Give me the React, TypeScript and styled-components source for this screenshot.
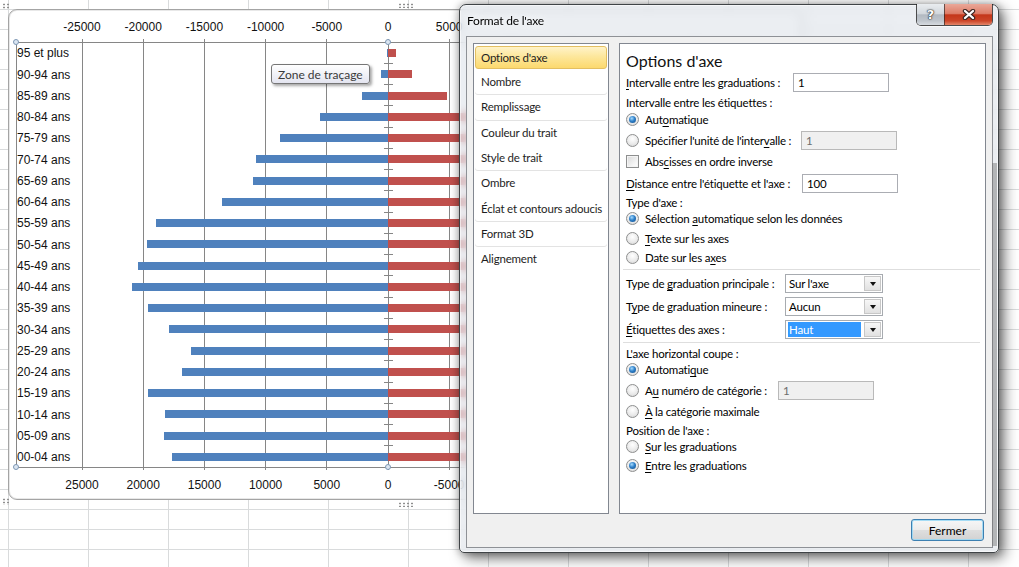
import React from 'react';
import styled, { createGlobalStyle, css } from 'styled-components';

const GlobalStyle = createGlobalStyle`
  html, body {
    margin: 0;
    padding: 0;
  }
  body {
    font-family: Lato, "Liberation Sans", sans-serif;
    font-size: 12px;
    color: #000;
  }
`;

// ---- data ----

type AgeRow = { label: string; m: number; f: number };

const AGES: AgeRow[] = [
  { label: '95 et plus', m: 90, f: 650 },
  { label: '90-94 ans', m: 570, f: 1960 },
  { label: '85-89 ans', m: 2150, f: 4800 },
  { label: '80-84 ans', m: 5560, f: 7800 },
  { label: '75-79 ans', m: 8820, f: 10900 },
  { label: '70-74 ans', m: 10780, f: 12300 },
  { label: '65-69 ans', m: 11030, f: 11900 },
  { label: '60-64 ans', m: 13560, f: 14100 },
  { label: '55-59 ans', m: 18950, f: 19600 },
  { label: '50-54 ans', m: 19690, f: 20100 },
  { label: '45-49 ans', m: 20420, f: 20500 },
  { label: '40-44 ans', m: 20920, f: 20800 },
  { label: '35-39 ans', m: 19610, f: 19500 },
  { label: '30-34 ans', m: 17890, f: 18100 },
  { label: '25-29 ans', m: 16090, f: 16500 },
  { label: '20-24 ans', m: 16830, f: 16400 },
  { label: '15-19 ans', m: 19580, f: 18700 },
  { label: '10-14 ans', m: 18220, f: 17400 },
  { label: '05-09 ans', m: 18300, f: 17500 },
  { label: '00-04 ans', m: 17620, f: 16900 },
];

const ZERO_X = 388;
const PX = 61.2 / 5000;
const PLOT = { left: 16, right: 760, top: 42, bottom: 467 };
const ROW_H = (PLOT.bottom - PLOT.top) / AGES.length;
const GRID = [-25000, -20000, -15000, -10000, -5000, 0, 5000, 10000, 15000, 20000, 25000];
// only the labels left of the dialog are drawn
const LABELED = [-25000, -20000, -15000, -10000, -5000, 0, 5000];
const xOf = (v: number) => ZERO_X + v * PX;

const NAV = [
  { label: "Options d'axe", active: true },
  { label: 'Nombre', sep: true },
  { label: 'Remplissage', sep: true },
  { label: 'Couleur du trait' },
  { label: 'Style de trait', sep: true },
  { label: 'Ombre' },
  { label: 'Éclat et contours adoucis', sep: true },
  { label: 'Format 3D', sep: true },
  { label: 'Alignement' },
];

// ---- sheet & chart ----

const Sheet = styled.div`
  position: relative;
  width: 1019px;
  height: 567px;
  overflow: hidden;
  background-color: #fff;
  background-image:
    linear-gradient(to right, #d9dbdc 1px, transparent 1px),
    linear-gradient(to bottom, #d9dbdc 1px, transparent 1px);
  background-size: 80px 20px;
  background-position: 8px 9px;
`;

const ChartArea = styled.div`
  position: absolute;
  left: 8px;
  top: 9px;
  width: 794px;
  height: 491px;
  box-sizing: border-box;
  border: 1px solid #a4a4a4;
  border-radius: 9px;
  background: #fff;
  box-shadow: inset 0 0 0 1px #e8e8e8;
  overflow: hidden;
`;

const Grip = styled.span<{ $x: number; $y: number; $w: number; $h: number }>`
  position: absolute;
  left: ${p => p.$x}px;
  top: ${p => p.$y}px;
  width: ${p => p.$w}px;
  height: ${p => p.$h}px;
  background-image: radial-gradient(circle, #8f8f8f 0.8px, transparent 1.2px);
  background-size: 4px 3px;
`;

const PlotSvg = styled.svg`
  display: block;
  font-family: "Liberation Sans", Arial, sans-serif;
  font-size: 12px;
`;

const GridLine = styled.line`
  stroke: #868686;
  stroke-width: 1;
  shape-rendering: crispEdges;
`;

const AxisText = styled.text`
  fill: #111;
`;

const Bar = styled.rect<{ $tone: 'male' | 'female' }>`
  fill: ${p => (p.$tone === 'male' ? '#4f81bd' : '#c0504d')};
  shape-rendering: crispEdges;
`;

const HandleDot = styled.circle`
  fill: #dce6f2;
  stroke: #7d97b4;
  stroke-width: 1;
`;

const Tooltip = styled.div`
  position: absolute;
  left: 271px;
  top: 64px;
  height: 20px;
  padding: 0 6px;
  box-sizing: border-box;
  display: flex;
  align-items: center;
  border: 1px solid #767676;
  border-radius: 3px;
  background: linear-gradient(#ffffff, #e4e5f0);
  box-shadow: 2px 2px 3px rgba(0, 0, 0, 0.35);
  color: #3a3a3a;
  font-size: 12px;
  white-space: nowrap;
`;

function PopulationChart() {
  return (
    <PlotSvg width={792} height={489} viewBox="9 10 792 489">
      {GRID.map(v => (
        <GridLine key={v} x1={xOf(v)} x2={xOf(v)} y1={PLOT.top - 3} y2={PLOT.bottom + 3} />
      ))}
      {LABELED.map(v => (
        <g key={v}>
          <AxisText x={xOf(v)} y={30.5} textAnchor="middle">{v}</AxisText>
          <AxisText x={xOf(v)} y={488.5} textAnchor="middle">{v === 0 ? 0 : -v}</AxisText>
        </g>
      ))}
      <GridLine x1={PLOT.left} x2={PLOT.right} y1={PLOT.top} y2={PLOT.top} />
      <GridLine x1={PLOT.left} x2={PLOT.right} y1={PLOT.bottom} y2={PLOT.bottom} />
      <GridLine x1={PLOT.left} x2={PLOT.left} y1={PLOT.top} y2={PLOT.bottom} />
      <GridLine x1={PLOT.right} x2={PLOT.right} y1={PLOT.top} y2={PLOT.bottom} />
      {AGES.slice(1).map((a, i) => {
        const y = PLOT.top + ROW_H * (i + 1);
        return <GridLine key={a.label} x1={ZERO_X - 4} x2={ZERO_X + 5} y1={y} y2={y} />;
      })}
      {AGES.map((a, i) => {
        const cy = PLOT.top + ROW_H * (i + 0.5) + 0.5;
        return (
          <g key={a.label}>
            <Bar $tone="male" x={xOf(-a.m)} y={cy - 4} width={a.m * PX} height={8} />
            <Bar $tone="female" x={ZERO_X} y={cy - 4} width={a.f * PX} height={8} />
            <AxisText x={17} y={cy + 4.3}>{a.label}</AxisText>
          </g>
        );
      })}
      <HandleDot cx={PLOT.left} cy={PLOT.top} r={2.5} />
      <HandleDot cx={PLOT.left} cy={PLOT.bottom} r={2.5} />
      <HandleDot cx={ZERO_X} cy={PLOT.top} r={2.5} />
      <HandleDot cx={ZERO_X} cy={PLOT.bottom} r={2.5} />
    </PlotSvg>
  );
}

// ---- dialog ----

const Dialog = styled.div`
  position: absolute;
  left: 459px;
  top: 4px;
  width: 540px;
  height: 549px;
  box-sizing: border-box;
  display: flex;
  flex-direction: column;
  border: 1px solid #3f4346;
  border-radius: 7px 7px 5px 5px;
  background: rgba(224, 229, 235, 0.66);
  backdrop-filter: blur(4px);
  box-shadow:
    inset 0 0 0 1px rgba(255, 255, 255, 0.55),
    5px 5px 14px rgba(0, 0, 0, 0.55),
    0 0 8px rgba(0, 0, 0, 0.3);
  font-size: 11.5px;
  letter-spacing: -0.2px;

  &::after {
    content: '';
    position: absolute;
    right: 1px;
    top: 158px;
    bottom: 6px;
    width: 5px;
    background: rgba(110, 110, 110, 0.45);
  }
`;

const TitleBar = styled.div`
  height: 31px;
  flex-shrink: 0;
  display: flex;
  align-items: center;
  padding: 0 5px 0 7px;
`;

const Caption = styled.span`
  font-size: 12px;
  text-shadow: 0 0 8px rgba(255, 255, 255, 0.95);
`;

const CaptionButtons = styled.div`
  margin-left: auto;
  align-self: flex-start;
  margin-top: -1px;
  display: flex;
  border: 1px solid rgba(35, 35, 35, 0.8);
  border-top: none;
  border-radius: 0 0 5px 5px;
  overflow: hidden;
  box-shadow: 0 1px 0 rgba(255, 255, 255, 0.7);
`;

const CaptionButton = styled.div<{ $close?: boolean }>`
  width: ${p => (p.$close ? 47 : 27)}px;
  height: 21px;
  display: flex;
  align-items: center;
  justify-content: center;
  color: #fff;
  font-family: "DejaVu Sans", sans-serif;
  font-weight: bold;
  font-size: 13px;
  letter-spacing: 0;
  text-shadow: 0 0 1px #222, 0 0 1px #222, 0 0 2px #333;
  background: ${p =>
    p.$close
      ? 'linear-gradient(#eaa899 0%, #dd7d68 45%, #c4361a 52%, #cc4528 80%, #e3866a 100%)'
      : 'linear-gradient(#e9ecef 0%, #d3d8dd 45%, #b3bac2 52%, #bfc5cc 80%, #d6dbe0 100%)'};

  & + & {
    border-left: 1px solid rgba(35, 35, 35, 0.65);
  }
`;

const Client = styled.div`
  flex: 1;
  margin: 0 5px 4px 6px;
  box-sizing: border-box;
  border: 1px solid #8e9196;
  background: #f0f0f0;
  padding: 6px 6px 0 6px;
  display: flex;
  flex-direction: column;
`;

const Body = styled.div`
  height: 471px;
  flex-shrink: 0;
  display: flex;
  gap: 10px;
`;

const Nav = styled.ul`
  list-style: none;
  margin: 0;
  padding: 2px 1px;
  width: 136px;
  box-sizing: border-box;
  border: 1px solid #828790;
  background: #fff;
`;

const NavItem = styled.li<{ $active?: boolean; $sep?: boolean }>`
  height: ${p => (p.$active ? 23 : 25.3)}px;
  box-sizing: border-box;
  display: flex;
  align-items: center;
  padding-left: 5px;
  border: 1px solid transparent;
  border-radius: 3px;
  color: #1e1e1e;
  white-space: nowrap;
  ${p =>
    p.$sep &&
    css`
      box-shadow: 0 1px 0 #e3e3e3;
    `}
  ${p =>
    p.$active &&
    css`
      border-color: #e3bf61;
      background: linear-gradient(#fff3c9 0%, #fde79c 45%, #fcd96e 100%);
    `}
`;

const Panel = styled.div`
  flex: 1;
  box-sizing: border-box;
  border: 1px solid #828790;
  background: #fff;
  padding: 0 6px;
  display: flex;
  flex-direction: column;
`;

const PanelTitle = styled.div`
  margin-top: 6px;
  height: 22px;
  line-height: 22px;
  font-size: 16px;
  letter-spacing: 0;
  color: #111;
`;

const Row = styled.div<{ $mt?: number; $h?: number }>`
  display: flex;
  align-items: center;
  flex-shrink: 0;
  height: ${p => p.$h ?? 16}px;
  margin-top: ${p => p.$mt ?? 0}px;
  white-space: nowrap;
`;

const Divider = styled.div<{ $mt?: number }>`
  height: 1px;
  flex-shrink: 0;
  margin: ${p => p.$mt ?? 0}px -1px 0 -3px;
  background: #dedede;
`;

const Label = styled.span<{ $w?: number }>`
  ${p =>
    p.$w &&
    css`
      width: ${p.$w}px;
      flex-shrink: 0;
    `}
`;

const U = styled.span`
  text-decoration: underline;
  text-underline-offset: 2px;
`;

const Radio = styled.span<{ $on?: boolean }>`
  position: relative;
  width: 13px;
  height: 13px;
  flex-shrink: 0;
  margin-right: 6px;
  box-sizing: border-box;
  border-radius: 50%;
  border: 1px solid #8e8f8f;
  background: radial-gradient(circle at 50% 35%, #ffffff 0%, #ebebeb 55%, #d2d2d2 100%);
  ${p =>
    p.$on &&
    css`
      &::after {
        content: '';
        position: absolute;
        left: 2px;
        top: 2px;
        width: 7px;
        height: 7px;
        border-radius: 50%;
        background: radial-gradient(circle at 40% 35%, #a6dcff 0%, #2f80c9 45%, #0f4a86 100%);
      }
    `}
`;

const Check = styled.span`
  width: 13px;
  height: 13px;
  flex-shrink: 0;
  margin-right: 6px;
  box-sizing: border-box;
  border: 1px solid #8e8f8f;
  background: linear-gradient(135deg, #d8d8d8 0%, #f6f6f6 70%, #ffffff 100%);
  box-shadow: inset 0 0 0 1px #f4f4f4;
`;

const TextBox = styled.div<{ $disabled?: boolean }>`
  width: 96px;
  height: 19px;
  box-sizing: border-box;
  display: flex;
  align-items: center;
  padding-left: 4px;
  border: 1px solid ${p => (p.$disabled ? '#b9b9b9' : '#abadb3')};
  background: ${p => (p.$disabled ? '#f0f0f0' : '#fff')};
  color: ${p => (p.$disabled ? '#6d6d6d' : '#000')};
`;

const Select = styled.div`
  width: 98px;
  height: 19px;
  box-sizing: border-box;
  display: flex;
  border: 1px solid #a7abb0;
  background: #fff;
`;

const SelectValue = styled.span<{ $selected?: boolean }>`
  flex: 1;
  display: flex;
  align-items: center;
  padding-left: 2px;
  ${p =>
    p.$selected
      ? css`
          margin: 1px 2px 1px 2px;
          padding-left: 1px;
          background: #3399ff;
          color: #fff;
        `
      : css`
          margin-left: 1px;
        `}
`;

const SelectArrow = styled.span`
  width: 17px;
  margin: 1px;
  box-sizing: border-box;
  display: flex;
  align-items: center;
  justify-content: center;
  border: 1px solid #c7c7c7;
  background: linear-gradient(#f7f7f7, #e1e1e1);

  &::before {
    content: '';
    border-top: 4px solid #111;
    border-left: 3.5px solid transparent;
    border-right: 3.5px solid transparent;
  }
`;

const Footer = styled.div`
  display: flex;
  justify-content: flex-end;
  margin-top: 5px;
  padding-right: 2px;
`;

const Button = styled.button`
  width: 73px;
  height: 22px;
  box-sizing: border-box;
  padding: 0;
  font: inherit;
  font-size: 12px;
  color: #000;
  border: 1px solid #3c7fb1;
  border-radius: 3px;
  background: linear-gradient(#f6f6f6 0%, #ececec 48%, #dedede 52%, #d2d2d2 100%);
  box-shadow: inset 0 0 0 1px rgba(150, 215, 245, 0.85);
`;

function Dropdown({ value, selected }: { value: string; selected?: boolean }) {
  return (
    <Select>
      <SelectValue $selected={selected}>{value}</SelectValue>
      <SelectArrow />
    </Select>
  );
}

function FormatDialog() {
  return (
    <Dialog>
      <TitleBar>
        <Caption>Format de l'axe</Caption>
        <CaptionButtons>
          <CaptionButton>?</CaptionButton>
          <CaptionButton $close>
            <svg width="14" height="11" viewBox="0 0 14 11">
              <path d="M3 2 L11 9 M11 2 L3 9" stroke="#3b2622" strokeWidth="4.4" strokeLinecap="round" />
              <path d="M3 2 L11 9 M11 2 L3 9" stroke="#fff" strokeWidth="2.3" strokeLinecap="round" />
            </svg>
          </CaptionButton>
        </CaptionButtons>
      </TitleBar>
      <Client>
        <Body>
          <Nav>
            {NAV.map(n => (
              <NavItem key={n.label} $active={n.active} $sep={n.sep}>
                {n.label}
              </NavItem>
            ))}
          </Nav>
          <Panel>
            <PanelTitle>Options d'axe</PanelTitle>
            <Row $h={20}>
              <Label $w={167}>
                <U>I</U>ntervalle entre les graduations :
              </Label>
              <TextBox>1</TextBox>
            </Row>
            <Row $mt={2}>
              <Label>Intervalle entre les étiquettes :</Label>
            </Row>
            <Row $mt={1}>
              <Radio $on />
              <Label>
                Aut<U>o</U>matique
              </Label>
            </Row>
            <Row $mt={3} $h={20}>
              <Radio />
              <Label $w={156}>
                Spécifier l'unité de l'inter<U>v</U>alle :
              </Label>
              <TextBox $disabled>1</TextBox>
            </Row>
            <Row $mt={3}>
              <Check />
              <Label>
                Abs<U>c</U>isses en ordre inverse
              </Label>
            </Row>
            <Row $mt={4} $h={20}>
              <Label $w={176}>
                <U>D</U>istance entre l'étiquette et l'axe :
              </Label>
              <TextBox>100</TextBox>
            </Row>
            <Row $mt={1}>
              <Label>Type d'axe :</Label>
            </Row>
            <Row>
              <Radio $on />
              <Label>
                Sélection <U>a</U>utomatique selon les données
              </Label>
            </Row>
            <Row $mt={4}>
              <Radio />
              <Label>
                <U>T</U>exte sur les axes
              </Label>
            </Row>
            <Row $mt={3}>
              <Radio />
              <Label>
                Date sur les a<U>x</U>es
              </Label>
            </Row>
            <Divider $mt={4} />
            <Row $mt={4} $h={19}>
              <Label $w={159}>
                Type de <U>g</U>raduation principale :
              </Label>
              <Dropdown value="Sur l'axe" />
            </Row>
            <Row $mt={4} $h={19}>
              <Label $w={159}>
                T<U>y</U>pe de graduation mineure :
              </Label>
              <Dropdown value="Aucun" />
            </Row>
            <Row $mt={4} $h={19}>
              <Label $w={159}>
                <U>É</U>tiquettes des axes :
              </Label>
              <Dropdown value="Haut" selected />
            </Row>
            <Divider $mt={3} />
            <Row $mt={2}>
              <Label>L'axe horizontal coupe :</Label>
            </Row>
            <Row>
              <Radio $on />
              <Label>
                Automati<U>q</U>ue
              </Label>
            </Row>
            <Row $mt={3} $h={20}>
              <Radio />
              <Label $w={133}>
                A<U>u</U> numéro de catégorie :
              </Label>
              <TextBox $disabled>1</TextBox>
            </Row>
            <Row $mt={3}>
              <Radio />
              <Label>
                <U>À</U> la catégorie maximale
              </Label>
            </Row>
            <Row $mt={3}>
              <Label>Position de l'axe :</Label>
            </Row>
            <Row>
              <Radio />
              <Label>
                <U>S</U>ur les graduations
              </Label>
            </Row>
            <Row $mt={3}>
              <Radio $on />
              <Label>
                <U>E</U>ntre les graduations
              </Label>
            </Row>
          </Panel>
        </Body>
        <Footer>
          <Button>Fermer</Button>
        </Footer>
      </Client>
    </Dialog>
  );
}

export default function App() {
  return (
    <>
      <GlobalStyle />
      <Sheet>
        <ChartArea>
          <PopulationChart />
        </ChartArea>
        <Grip $x={2} $y={3} $w={8} $h={6} />
        <Grip $x={398} $y={3} $w={16} $h={5} />
        <Grip $x={2} $y={498} $w={8} $h={7} />
        <Grip $x={398} $y={502} $w={16} $h={5} />
        <Tooltip>Zone de traçage</Tooltip>
        <FormatDialog />
      </Sheet>
    </>
  );
}
